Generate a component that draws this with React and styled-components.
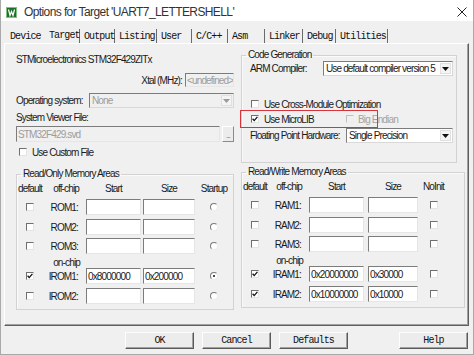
import React from 'react';
import styled, { createGlobalStyle } from 'styled-components';

const GlobalStyle = createGlobalStyle`
  html, body {
    margin: 0;
    padding: 0;
    background: #f0f0f0;
  }
  body {
    font-family: "Liberation Sans", Arial, sans-serif;
  }
`;

const tabs = [
  { label: 'Device', w: 39, sep: false },
  { label: 'Target', w: 35, sep: true, active: true },
  { label: 'Output', w: 35, sep: true },
  { label: 'Listing', w: 42, sep: true },
  { label: 'User', w: 35, sep: true },
  { label: 'C/C++', w: 36, sep: true },
  { label: 'Asm', w: 37, sep: true },
  { label: 'Linker', w: 38, sep: true },
  { label: 'Debug', w: 33, sep: true },
  { label: 'Utilities', w: 52, sep: true },
];

const romRows = [
  { label: 'ROM1:', start: '', size: '', mt: 5 },
  { label: 'ROM2:', start: '', size: '', mt: 4 },
  { label: 'ROM3:', start: '', size: '', mt: 3 },
  { label: 'IROM1:', start: '0x8000000', size: '0x200000', on: true, mark: true, mt: 0, chip: true },
  { label: 'IROM2:', start: '', size: '', mt: 4 },
];

const ramRows = [
  { label: 'RAM1:', start: '', size: '', mt: 5 },
  { label: 'RAM2:', start: '', size: '', mt: 4 },
  { label: 'RAM3:', start: '', size: '', mt: 3 },
  { label: 'IRAM1:', start: '0x20000000', size: '0x30000', on: true, mt: 0, chip: true },
  { label: 'IRAM2:', start: '0x10000000', size: '0x10000', on: true, mt: 4 },
];

function Check({ checked, disabled }) {
  return (
    <CheckBox $disabled={disabled}>
      {checked && (
        <svg width="6" height="6" viewBox="0 0 6 6">
          <path d="M0.6 2.8 L2.2 4.6 L5.4 0.8" fill="none" stroke="#111" strokeWidth="1.3" />
        </svg>
      )}
    </CheckBox>
  );
}

function Dropdown({ value, w, disabled }) {
  return (
    <Select $w={w} $disabled={disabled}>
      <SelectText $disabled={disabled}>{value}</SelectText>
      <SelectButton>
        <svg width="7" height="4" viewBox="0 0 7 4">
          <path d="M0 0 H7 L3.5 4 Z" fill={disabled ? '#9a9a9a' : '#111'} />
        </svg>
      </SelectButton>
    </Select>
  );
}

function MemoryGroup({ title, rows, cols, gap, lastHeader, lastCheck }) {
  return (
    <Group $mt={lastCheck ? 3 : 10} $mr={lastCheck ? 2 : 0}>
      <Legend>{title}</Legend>
      <MemRow $cols={cols} $gap={gap} $h={12} $mt={2}>
        <HeadCell>default</HeadCell>
        <HeadCell $right>off-chip</HeadCell>
        <HeadCell>Start</HeadCell>
        <HeadCell>Size</HeadCell>
        <HeadCell>{lastHeader}</HeadCell>
      </MemRow>
      {rows.map((r) => (
        <React.Fragment key={r.label}>
          {r.chip && (
            <MemRow $cols={cols} $gap={gap} $h={12} $mt={2}>
              <span />
              <RowLabel $chip>on-chip</RowLabel>
            </MemRow>
          )}
          <MemRow $cols={cols} $gap={gap} $h={16} $mt={r.mt}>
            <Cell><Check checked={r.on} /></Cell>
            <RowLabel>{r.label}</RowLabel>
            <TextBox>{r.start}</TextBox>
            <TextBox>{r.size}</TextBox>
            <Cell>{lastCheck ? <Check /> : <Radio $on={r.mark} />}</Cell>
          </MemRow>
        </React.Fragment>
      ))}
    </Group>
  );
}

export default function App() {
  return (
    <>
      <GlobalStyle />
      <Window>
        <TitleBar>
          <AppIcon>
            <svg width="11" height="11" viewBox="0 0 11 11">
              <rect x="0.5" y="0.5" width="10" height="10" fill="#1f6f2a" stroke="#7cc47f" />
              <path d="M2.5 2.5 L4 8.5 L5.5 4.5 L7 8.5 L8.5 2.5" fill="none" stroke="#fff" strokeWidth="1.2" />
            </svg>
          </AppIcon>
          <Title>Options for Target 'UART7_LETTERSHELL'</Title>
          <Close>
            <svg width="10" height="10" viewBox="0 0 10 10">
              <path d="M0.5 0.5 L9.5 9.5 M9.5 0.5 L0.5 9.5" stroke="#222" strokeWidth="1" />
            </svg>
          </Close>
        </TitleBar>

        <TabStrip>
          {tabs.map((t) => (
            <Tab key={t.label} $w={t.w} $sep={t.sep} $active={t.active}>{t.label}</Tab>
          ))}
        </TabStrip>

        <Panel>
          <LeftCol>
            <Line $mt={10}>STMicroelectronics STM32F429ZITx</Line>
            <Row $mt={7} $h={14} $end>
              <Label>Xtal (MHz):</Label>
              <TextBox $w={49} $disabled $ml={3}>&lt;undefined&gt;</TextBox>
            </Row>
            <Row $mt={6} $h={15}>
              <Label $w={73}>Operating system:</Label>
              <Dropdown value="None" w={145} disabled />
            </Row>
            <Line $mt={4}>System Viewer File:</Line>
            <Row $mt={2} $h={16}>
              <TextBox $disabled $grow>STM32F429.svd</TextBox>
              <Browse>...</Browse>
            </Row>
            <Row $mt={4} $h={12}>
              <CheckSpot $ml={3}><Check /></CheckSpot>
              <Label $ml={5}>Use Custom File</Label>
            </Row>
            <MemoryGroup
              title="Read/Only Memory Areas"
              rows={romRows}
              cols="26px 43px 55px 54px 1fr"
              gap={2}
              lastHeader="Startup"
            />
          </LeftCol>

          <RightCol>
            <Group $mt={5} $mr={10} $pb={19}>
              <Legend>Code Generation</Legend>
              <Row $h={15} $ml={8}>
                <Label $w={73}>ARM Compiler:</Label>
                <Dropdown value="Use default compiler version 5" w={130} />
              </Row>
              <Row $mt={22} $h={12} $ml={9}>
                <CheckSpot><Check /></CheckSpot>
                <Label $ml={5}>Use Cross-Module Optimization</Label>
              </Row>
              <Row $mt={3} $h={12} $ml={9}>
                <CheckSpot><Check checked /></CheckSpot>
                <Label $ml={5} $w={82}>Use MicroLIB</Label>
                <CheckSpot><Check disabled /></CheckSpot>
                <Label $ml={4} $disabled>Big Endian</Label>
              </Row>
              <Row $mt={3} $h={15} $ml={8}>
                <Label $w={96}>Floating Point Hardware:</Label>
                <Dropdown value="Single Precision" w={107} />
              </Row>
            </Group>
            <Highlight />
            <MemoryGroup
              title="Read/Write Memory Areas"
              rows={ramRows}
              cols="26px 41px 55px 54px 31px"
              gap={4}
              lastHeader="NoInit"
              lastCheck
            />
          </RightCol>
        </Panel>

        <ButtonRow>
          <Button>OK</Button>
          <Button>Cancel</Button>
          <Button>Defaults</Button>
          <Button $ml={43}>Help</Button>
        </ButtonRow>
      </Window>
    </>
  );
}

const Window = styled.div`
  width: 474px;
  height: 355px;
  box-sizing: border-box;
  display: flex;
  flex-direction: column;
  background: #f0f0f0;
  border: 1px solid #a9a9a9;
  border-top: none;
  overflow: hidden;
  font-size: 10px;
  letter-spacing: -0.85px;
  color: #1a1a1a;
`;

const TitleBar = styled.div`
  height: 21px;
  flex: 0 0 21px;
  display: flex;
  align-items: center;
  background: #fff;
  padding-left: 6px;
  margin: 0 -1px;
`;

const AppIcon = styled.span`
  display: flex;
  margin-top: 3px;
`;

const Title = styled.span`
  margin-left: 7px;
  font-size: 12px;
  letter-spacing: -0.6px;
  color: #333;
  margin-top: 2px;
`;

const Close = styled.span`
  margin-left: auto;
  margin-right: 7px;
  display: flex;
  margin-top: 2px;
`;

const TabStrip = styled.div`
  height: 22px;
  flex: 0 0 22px;
  display: flex;
  align-items: flex-end;
  padding-left: 5px;
`;

const Tab = styled.div`
  width: ${(p) => p.$w}px;
  height: 14px;
  box-sizing: border-box;
  padding-left: 4px;
  padding-bottom: ${(p) => (p.$active ? 2 : 0)}px;
  border-right: 1px solid #6a6a6a;
  display: flex;
  align-items: center;
  font-family: "Liberation Mono", "Courier New", monospace;
  font-size: 10px;
  letter-spacing: -0.9px;
  color: #111;
  white-space: nowrap;
  &:first-child {
    border-right: none;
  }
`;

const Panel = styled.div`
  margin-left: 3px;
  width: 465px;
  height: 283px;
  flex: 0 0 283px;
  box-sizing: border-box;
  border: 1px solid;
  border-color: #fff #5f5f5f #5f5f5f #fff;
  box-shadow: inset -1px -1px 0 #a0a0a0;
  display: grid;
  grid-template-columns: 234px 1fr;
`;

const LeftCol = styled.div`
  display: flex;
  flex-direction: column;
  padding: 0 5px 0 11px;
`;

const RightCol = styled.div`
  position: relative;
  display: flex;
  flex-direction: column;
  padding: 0 1px 0 2px;
`;

const Line = styled.div`
  height: 12px;
  line-height: 12px;
  margin-top: ${(p) => p.$mt || 0}px;
  white-space: nowrap;
`;

const Row = styled.div`
  display: flex;
  align-items: center;
  height: ${(p) => p.$h}px;
  margin-top: ${(p) => p.$mt || 0}px;
  margin-left: ${(p) => p.$ml || 0}px;
  justify-content: ${(p) => (p.$end ? 'flex-end' : 'flex-start')};
`;

const Label = styled.span`
  flex: 0 0 ${(p) => (p.$w ? `${p.$w}px` : 'auto')};
  margin-left: ${(p) => p.$ml || 0}px;
  white-space: nowrap;
  color: ${(p) => (p.$disabled ? '#a3a3a3' : '#1a1a1a')};
`;

const TextBox = styled.div`
  box-sizing: border-box;
  height: ${(p) => (p.$w ? 14 : 16)}px;
  ${(p) => (p.$grow ? 'flex: 1;' : '')}
  ${(p) => (p.$w ? `width: ${p.$w}px;` : '')}
  margin-left: ${(p) => p.$ml || 0}px;
  background: ${(p) => (p.$disabled ? '#f0f0f0' : '#fff')};
  border: 1px solid;
  border-color: #7c7c7c #e6e6e6 #e6e6e6 #7c7c7c;
  padding-left: 1px;
  display: flex;
  align-items: center;
  color: ${(p) => (p.$disabled ? '#9c9c9c' : '#1a1a1a')};
  white-space: nowrap;
  overflow: hidden;
`;

const Browse = styled.div`
  width: 12px;
  height: 16px;
  margin-left: 2px;
  box-sizing: border-box;
  border: 1px solid;
  border-color: #fff #8a8a8a #8a8a8a #fff;
  background: #ececec;
  color: #666;
  font-size: 8px;
  display: flex;
  align-items: flex-end;
  justify-content: center;
  line-height: 10px;
`;

const Select = styled.div`
  box-sizing: border-box;
  width: ${(p) => p.$w}px;
  height: 15px;
  display: flex;
  align-items: center;
  background: ${(p) => (p.$disabled ? '#f0f0f0' : '#fff')};
  border: 1px solid;
  border-color: #7c7c7c #d8d8d8 #d8d8d8 #7c7c7c;
`;

const SelectText = styled.span`
  flex: 1;
  padding-left: 2px;
  white-space: nowrap;
  overflow: hidden;
  color: ${(p) => (p.$disabled ? '#9c9c9c' : '#1a1a1a')};
`;

const SelectButton = styled.span`
  width: 11px;
  height: 11px;
  margin-right: 1px;
  box-sizing: border-box;
  display: flex;
  align-items: center;
  justify-content: center;
  background: #f4f4f4;
  border: 1px solid #e0e0e0;
`;

const CheckSpot = styled.span`
  display: flex;
  margin-left: ${(p) => p.$ml || 0}px;
`;

const CheckBox = styled.span`
  width: 8px;
  height: 8px;
  box-sizing: border-box;
  display: flex;
  align-items: center;
  justify-content: center;
  background: ${(p) => (p.$disabled ? '#f0f0f0' : '#fff')};
  border: 1px solid;
  border-color: ${(p) => (p.$disabled ? '#c0c0c0 #eee #eee #c0c0c0' : '#6f6f6f #e4e4e4 #e4e4e4 #6f6f6f')};
`;

const Radio = styled.span`
  width: 8px;
  height: 8px;
  box-sizing: border-box;
  border-radius: 50%;
  border: 1px solid;
  border-color: #7a7a7a #ececec #ececec #7a7a7a;
  background: #fff;
  display: flex;
  align-items: center;
  justify-content: center;
  &::after {
    content: '';
    width: 2px;
    height: 2px;
    border-radius: 50%;
    background: ${(p) => (p.$on ? '#111' : 'transparent')};
  }
`;

const Group = styled.fieldset`
  margin: ${(p) => p.$mt}px ${(p) => p.$mr || 0}px 0 ${(p) => (p.$mr === undefined ? 1 : 0)}px;
  padding: 0 0 ${(p) => (p.$pb === undefined ? 5 : p.$pb)}px 0;
  min-width: 0;
  border: 1px solid #d2d2d2;
  box-shadow: inset 1px 1px 0 #fafafa;
`;

const Legend = styled.legend`
  padding: 0 2px;
  margin-left: 4px;
  line-height: 12px;
  height: 12px;
  white-space: nowrap;
`;

const MemRow = styled.div`
  display: grid;
  grid-template-columns: ${(p) => p.$cols};
  height: ${(p) => p.$h}px;
  margin-top: ${(p) => p.$mt}px;
  align-items: center;
  & > :nth-child(4) {
    margin-left: ${(p) => p.$gap}px;
  }
`;

const HeadCell = styled.span`
  text-align: ${(p) => (p.$right ? 'right' : 'center')};
  padding-right: ${(p) => (p.$right ? 7 : 0)}px;
  white-space: nowrap;
`;

const RowLabel = styled.span`
  text-align: right;
  padding-right: ${(p) => (p.$chip ? 6 : 8)}px;
  white-space: nowrap;
`;

const Cell = styled.span`
  display: flex;
  justify-content: center;
`;

const Highlight = styled.div`
  position: absolute;
  left: 1px;
  top: 66px;
  width: 138px;
  height: 18px;
  box-sizing: border-box;
  border: 1.5px solid #d7343c;
  pointer-events: none;
`;

const ButtonRow = styled.div`
  flex: 1;
  display: flex;
  gap: 8px;
  padding: 6px 0 0 124px;
`;

const Button = styled.div`
  width: 69px;
  height: 17px;
  box-sizing: border-box;
  margin-left: ${(p) => p.$ml || 0}px;
  border: 1px solid;
  border-color: #fdfdfd #5a5a5a #5a5a5a #fdfdfd;
  box-shadow: inset -1px -1px 0 #a0a0a0;
  background: #ececec;
  display: flex;
  align-items: center;
  justify-content: center;
  font-family: "Liberation Mono", "Courier New", monospace;
  font-size: 10px;
  letter-spacing: -0.9px;
  color: #111;
`;
